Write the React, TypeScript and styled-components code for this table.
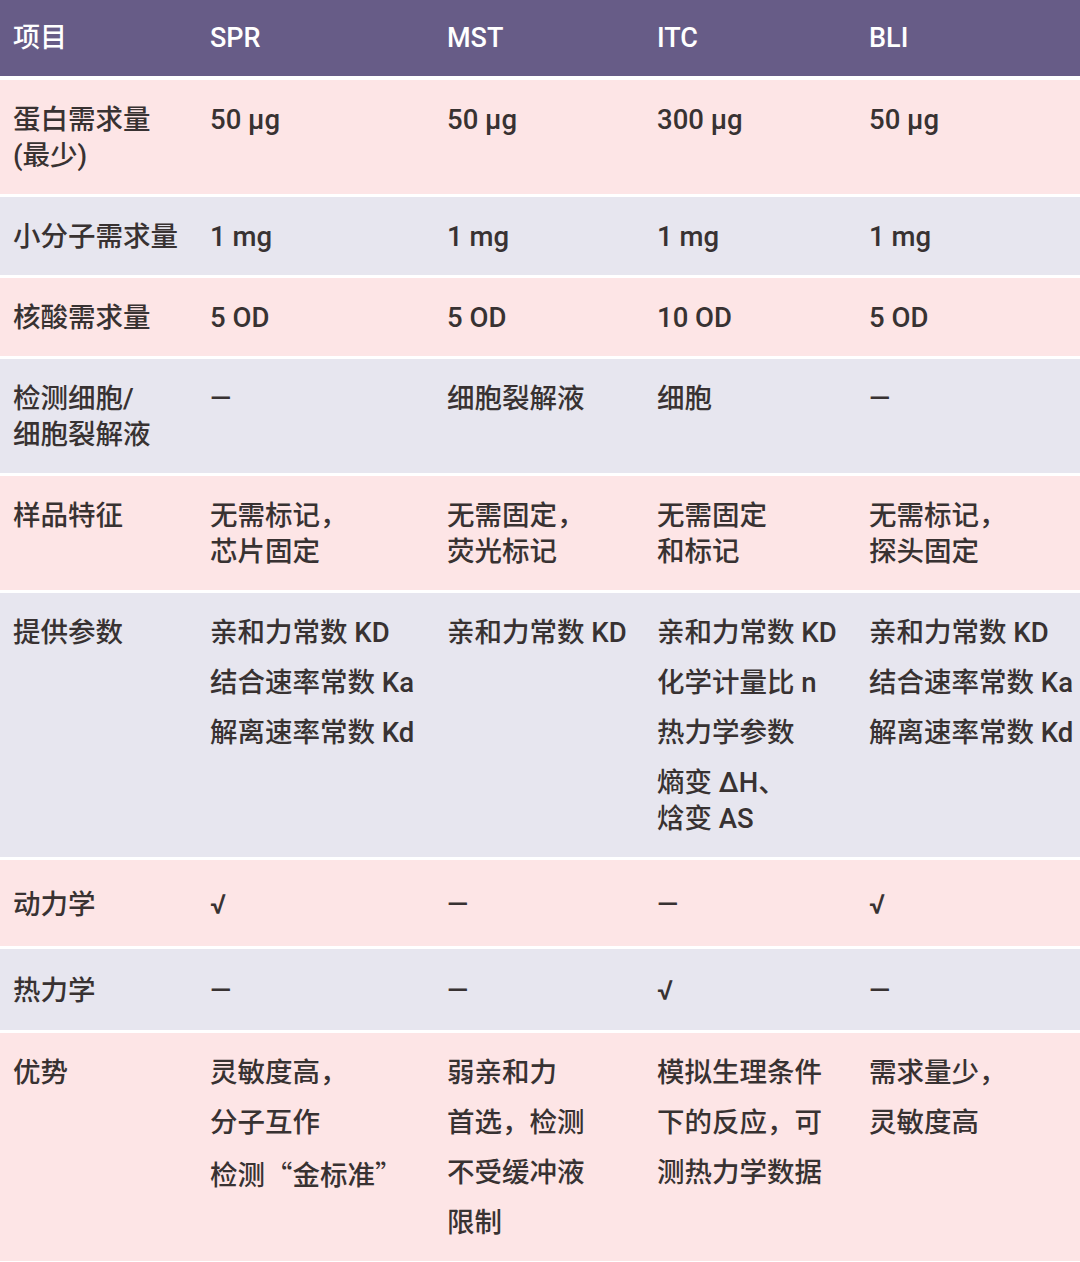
import React from 'react';
import styled, { createGlobalStyle } from 'styled-components';

const GlobalStyle = createGlobalStyle`
  html, body {
    margin: 0;
    padding: 0;
    background: #ffffff;
  }
  body {
    font-family: Roboto, "Noto Sans CJK SC", sans-serif;
  }
`;

const COLUMNS = '197px 237px 210px 212px 224px';

type Tone = 'pink' | 'grey';

const tones: Record<Tone, string> = {
  pink: '#fde5e6',
  grey: '#e7e6ef',
};

const Table = styled.div`
  display: flex;
  flex-direction: column;
  gap: 3px;
  width: 1080px;
  background: #ffffff;
`;

const HeaderRow = styled.div`
  display: grid;
  grid-template-columns: ${COLUMNS};
  height: 76px;
  align-items: center;
  background: #675c87;
  margin-bottom: 1px;
`;

const HeaderCell = styled.div`
  padding-left: 13px;
  color: #ffffff;
  font-size: 27px;
  font-weight: 500;
  line-height: 36px;
`;

const Row = styled.div<{ $tone: Tone; $padTop: number; $padBottom: number }>`
  display: grid;
  grid-template-columns: ${COLUMNS};
  background: ${(p) => tones[p.$tone]};
  padding: ${(p) => p.$padTop}px 0 ${(p) => p.$padBottom}px;
`;

const Cell = styled.div`
  display: flex;
  flex-direction: column;
  gap: 14px;
  padding-left: 13px;
  color: #383232;
  font-size: 27.5px;
  font-weight: 500;
  line-height: 36px;
  white-space: pre-line;
`;

const Para = styled.div``;

const CjkQuote = styled.span`
  font-family: "Noto Sans CJK SC", sans-serif;
  font-weight: 400;
`;

type RowData = {
  tone: Tone;
  label: string;
  cells: React.ReactNode[][];
  padTop?: number;
  padBottom?: number;
};

const DASH = '—';

const rows: RowData[] = [
  {
    tone: 'pink',
    label: '蛋白需求量\n(最少)',
    cells: [['50 μg'], ['50 μg'], ['300 μg'], ['50 μg']],
  },
  {
    tone: 'grey',
    label: '小分子需求量',
    cells: [['1 mg'], ['1 mg'], ['1 mg'], ['1 mg']],
  },
  {
    tone: 'pink',
    label: '核酸需求量',
    cells: [['5 OD'], ['5 OD'], ['10 OD'], ['5 OD']],
  },
  {
    tone: 'grey',
    label: '检测细胞/\n细胞裂解液',
    cells: [[DASH], ['细胞裂解液'], ['细胞'], [DASH]],
  },
  {
    tone: 'pink',
    label: '样品特征',
    cells: [
      ['无需标记，\n芯片固定'],
      ['无需固定，\n荧光标记'],
      ['无需固定\n和标记'],
      ['无需标记，\n探头固定'],
    ],
  },
  {
    tone: 'grey',
    label: '提供参数',
    cells: [
      ['亲和力常数 KD', '结合速率常数 Ka', '解离速率常数 Kd'],
      ['亲和力常数 KD'],
      ['亲和力常数 KD', '化学计量比 n', '热力学参数', '熵变 ΔH、\n焓变 AS'],
      ['亲和力常数 KD', '结合速率常数 Ka', '解离速率常数 Kd'],
    ],
  },
  {
    tone: 'pink',
    label: '动力学',
    cells: [['√'], [DASH], [DASH], ['√']],
    padTop: 27,
    padBottom: 23,
  },
  {
    tone: 'grey',
    label: '热力学',
    cells: [[DASH], [DASH], ['√'], [DASH]],
    padTop: 24,
    padBottom: 21,
  },
  {
    tone: 'pink',
    label: '优势',
    cells: [
      [
        '灵敏度高，',
        '分子互作',
        <>
          检测<CjkQuote>“</CjkQuote>金标准<CjkQuote>”</CjkQuote>
        </>,
      ],
      ['弱亲和力', '首选，检测', '不受缓冲液', '限制'],
      ['模拟生理条件', '下的反应，可', '测热力学数据'],
      ['需求量少，', '灵敏度高'],
    ],
  },
];

const headers = ['项目', 'SPR', 'MST', 'ITC', 'BLI'];

export default function App() {
  return (
    <>
      <GlobalStyle />
      <Table>
        <HeaderRow>
          {headers.map((h) => (
            <HeaderCell key={h}>{h}</HeaderCell>
          ))}
        </HeaderRow>
        {rows.map((row) => (
          <Row
            key={row.label}
            $tone={row.tone}
            $padTop={row.padTop ?? 22}
            $padBottom={row.padBottom ?? 20}
          >
            <Cell>
              <Para>{row.label}</Para>
            </Cell>
            {row.cells.map((paras, i) => (
              <Cell key={i}>
                {paras.map((p, j) => (
                  <Para key={j}>{p}</Para>
                ))}
              </Cell>
            ))}
          </Row>
        ))}
      </Table>
    </>
  );
}
